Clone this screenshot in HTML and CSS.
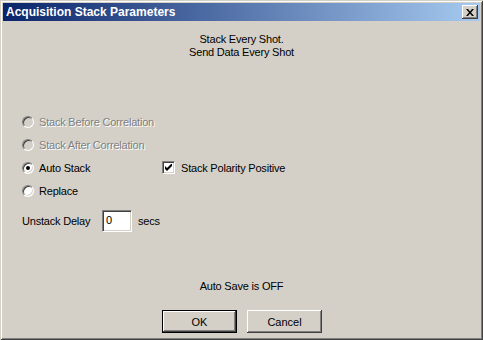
FILE: index.html
```html
<!DOCTYPE html>
<html lang="en">
<head>
    <meta charset="UTF-8">
    <title>Acquisition Stack Parameters</title>
    <link rel="stylesheet" href="styles.css">
</head>
<body>
    <div class="window">
        <div class="titlebar">
            <span class="title">Acquisition Stack Parameters</span>
            <span class="close-btn">
                <svg width="8" height="7" viewBox="0 0 8 7"><path d="M0 0h2l2 2.5L6 0h2L5 3.5 8 7H6L4 4.5 2 7H0l3-3.5z" fill="#000"/></svg>
            </span>
        </div>

        <div class="content">
            <div class="summary">
                <p>Stack Every Shot.</p>
                <p>Send Data Every Shot</p>
            </div>

            <div class="options">
                <div class="row">
                    <label class="radio disabled"><span class="radio-box"></span>Stack Before Correlation</label>
                </div>
                <div class="row">
                    <label class="radio disabled"><span class="radio-box"></span>Stack After Correlation</label>
                </div>
                <div class="row">
                    <label class="radio"><span class="radio-box checked"></span>Auto Stack</label>
                    <label class="check"><span class="check-box">
                        <svg width="7" height="7" viewBox="0 0 7 7"><path d="M0 2v3l2 2 5-5V-1L2 4z" fill="#000"/></svg>
                    </span>Stack Polarity Positive</label>
                </div>
                <div class="row">
                    <label class="radio"><span class="radio-box"></span>Replace</label>
                </div>
            </div>

            <div class="delay-row">
                <span class="delay-label">Unstack Delay</span>
                <span class="text-input">0</span>
                <span class="unit">secs</span>
            </div>

            <p class="status">Auto Save is OFF</p>

            <div class="buttons">
                <button class="btn default">OK</button>
                <button class="btn">Cancel</button>
            </div>
        </div>
    </div>
</body>
</html>
```

FILE: styles.css
```css
/* Reset */
* {
  margin: 0;
  padding: 0;
  box-sizing: border-box;
}

body {
  font-family: "Liberation Sans", Arial, sans-serif;
  font-size: 11px;
  color: #000;
  background: #d4d0c8;
}

/* Window frame */
.window {
  width: 483px;
  height: 340px;
  padding: 3px;
  background: #d4d0c8;
  display: flex;
  flex-direction: column;
  box-shadow: inset 1px 1px #d4d0c8, inset -1px -1px #404040,
              inset 2px 2px #fff, inset -2px -2px #808080;
}

/* Title bar */
.titlebar {
  height: 18px;
  display: flex;
  align-items: center;
  justify-content: space-between;
  padding: 0 2px 0 3px;
  background: linear-gradient(to right, #0a246a, #a6caf0);
}

.title {
  color: #fff;
  font-weight: bold;
  font-size: 12px;
}

.close-btn {
  width: 16px;
  height: 14px;
  display: flex;
  align-items: center;
  justify-content: center;
  background: #d4d0c8;
  box-shadow: inset -1px -1px #404040, inset 1px 1px #fff,
              inset -2px -2px #808080;
}

/* Content */
.content {
  flex: 1;
  display: flex;
  flex-direction: column;
  padding-left: 19px;
  letter-spacing: -0.2px;
}

.summary {
  margin-top: 12px;
  margin-left: -19px;
  text-align: center;
  line-height: 13px;
}

.options {
  margin-top: 51px;
}

.row {
  height: 23px;
  display: flex;
  align-items: center;
}

.radio, .check {
  display: flex;
  align-items: center;
}

.radio {
  width: 140px;
}

.radio.disabled {
  color: #808080;
  text-shadow: 1px 1px #fff;
}

.radio-box {
  position: relative;
  width: 12px;
  height: 12px;
  margin-right: 5px;
  border-radius: 50%;
  background: #fff;
  border: 1px solid;
  border-color: #808080 #fff #fff #808080;
  box-shadow: inset 1px 1px #404040, inset -1px -1px #d4d0c8;
}

.radio.disabled .radio-box {
  background: #d4d0c8;
}

.radio-box.checked::after {
  content: "";
  position: absolute;
  left: 3px;
  top: 3px;
  width: 4px;
  height: 4px;
  border-radius: 50%;
  background: #000;
}

.check-box {
  width: 13px;
  height: 13px;
  margin-right: 6px;
  display: flex;
  align-items: center;
  justify-content: center;
  background: #fff;
  border: 1px solid;
  border-color: #808080 #fff #fff #808080;
  box-shadow: inset 1px 1px #404040, inset -1px -1px #d4d0c8;
}

/* Unstack delay */
.delay-row {
  margin-top: 8px;
  height: 22px;
  display: flex;
  align-items: center;
}

.delay-label {
  width: 80px;
}

.text-input {
  width: 30px;
  height: 22px;
  padding: 3px 0 0 3px;
  background: #fff;
  border: 1px solid;
  border-color: #808080 #fff #fff #808080;
  box-shadow: inset 1px 1px #404040, inset -1px -1px #d4d0c8;
}

.unit {
  margin-left: 6px;
}

/* Status + buttons */
.status {
  margin-top: 48px;
  margin-left: -19px;
  line-height: 13px;
  text-align: center;
}

.buttons {
  margin-top: 17px;
  margin-left: 140px;
  display: flex;
  gap: 10px;
}

.btn {
  width: 75px;
  height: 23px;
  font-family: inherit;
  font-size: 11px;
  color: #000;
  background: #d4d0c8;
  border: none;
  box-shadow: inset -1px -1px #404040, inset 1px 1px #fff,
              inset -2px -2px #808080;
}

.btn.default {
  border: 1px solid #000;
}
```
